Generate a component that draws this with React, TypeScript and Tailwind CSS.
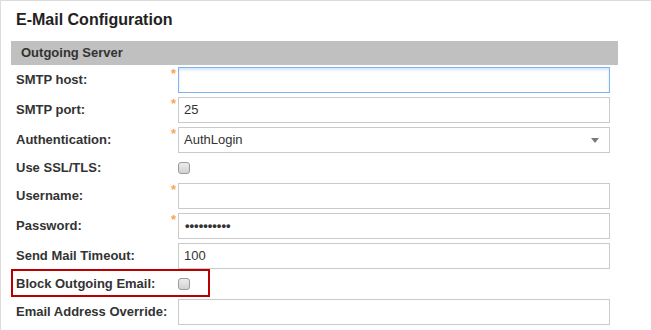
const font = { fontFamily: '"Liberation Sans", Arial, sans-serif' };

function Star() {
  return (
    <span className="w-[7px] self-start pt-[1px] text-[13px] font-bold leading-[12px] text-[#f9a54a]">
      *
    </span>
  );
}

function InputRow({
  label,
  required,
  value,
  focused,
  select,
  secret,
}: {
  label: string;
  required?: boolean;
  value?: string;
  focused?: boolean;
  select?: boolean;
  secret?: boolean;
}) {
  return (
    <div className="flex h-[26px] items-center">
      <p className="w-[160px] pl-[5px] text-[13px] font-bold text-[#333]">{label}</p>
      {required ? <Star /> : <span className="w-[7px]" />}
      <div
        className={
          focused
            ? "flex h-[26px] w-[432px] items-center border border-[#7db5ee] pl-[5px] text-[13px] text-[#333] shadow-[inset_0_2px_3px_rgba(125,181,238,0.35)]"
            : "flex h-[26px] w-[432px] items-center border border-[#cacaca] pl-[5px] text-[13px] text-[#333]"
        }
      >
        <span className={secret ? "flex-1 pl-[1px] text-[13px] font-bold" : "flex-1"}>
          {value}
        </span>
        {select && (
          <svg width="8" height="5" viewBox="0 0 8 5" className="mr-[10px]">
            <path d="M0 0h8L4 5z" fill="#7a7a7a" />
          </svg>
        )}
      </div>
    </div>
  );
}

function CheckRow({ label, flagged }: { label: string; flagged?: boolean }) {
  return (
    <div className="relative flex h-[22px] items-center">
      {flagged && (
        <div className="absolute left-0 top-[-4px] h-[28px] w-[199px] border-2 border-[#b80000]" />
      )}
      <p className="w-[167px] pl-[5px] text-[13px] font-bold text-[#333]">{label}</p>
      <span className="h-[12px] w-[12px] rounded-[3px] border border-[#9a9a9a] bg-gradient-to-b from-[#ececec] to-[#d2d2d2]" />
    </div>
  );
}

export default function App() {
  return (
    <div
      className="h-[330px] w-[651px] overflow-hidden border-l border-t border-[#dcdcdc] bg-white"
      style={font}
    >
      <div className="h-[40px] pl-[15px] pt-[10px]">
        <h1 className="text-[16px] font-bold leading-[18px] text-[#222]">E-Mail Configuration</h1>
      </div>

      <div className="ml-[10px] w-[607px]">
        <div className="flex h-[24px] items-center bg-[#c0c0c0] pl-[10px] text-[13px] font-bold text-[#333]">
          Outgoing Server
        </div>

        <div className="mt-[2px] flex flex-col gap-[4px]">
          <InputRow label="SMTP host:" required focused />
          <InputRow label="SMTP port:" required value="25" />
          <InputRow label="Authentication:" required value="AuthLogin" select />
          <CheckRow label="Use SSL/TLS:" />
          <InputRow label="Username:" required />
          <InputRow label="Password:" required value="••••••••••" secret />
          <InputRow label="Send Mail Timeout:" value="100" />
          <CheckRow label="Block Outgoing Email:" flagged />
          <InputRow label="Email Address Override:" />
        </div>
      </div>
    </div>
  );
}
